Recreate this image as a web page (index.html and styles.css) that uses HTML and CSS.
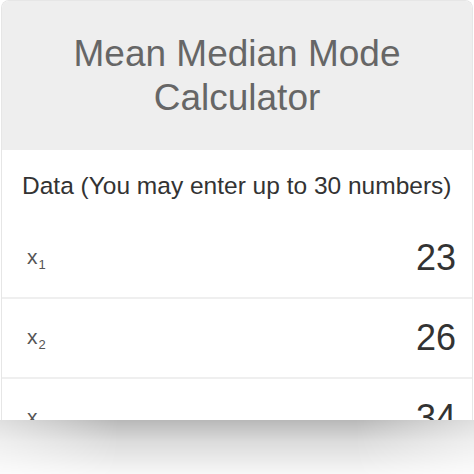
FILE: index.html
```html
<!DOCTYPE html>
<html>
<head>
<meta charset="utf-8">
<link rel="stylesheet" href="styles.css">
</head>
<body>
<div class="page">
  <div class="card">
    <div class="header">
      <h1 class="title">Mean Median Mode<br>Calculator</h1>
    </div>
    <div class="body">
      <div class="label">Data (You may enter up to 30 numbers)</div>
      <div class="row"><span class="var">x<sub>1</sub></span><span class="val">23</span></div>
      <div class="row"><span class="var">x<sub>2</sub></span><span class="val">26</span></div>
      <div class="row"><span class="var">x<sub>3</sub></span><span class="val">34</span></div>
    </div>
  </div>
  <div class="fade"></div>
</div>
</body>
</html>
```
FILE: styles.css
```css
html, body {
  margin: 0;
  padding: 0;
  background: #ffffff;
}
.page {
  width: 474px;
  height: 474px;
  overflow: hidden;
  font-family: "Liberation Sans", Arial, sans-serif;
}
.card {
  margin: 0 1px;
  height: 420px;
  overflow: hidden;
  border: 1px solid #e6e6e6;
  border-bottom: none;
  border-radius: 8px 8px 0 0;
  box-sizing: border-box;
  background: #ffffff;
}
.header {
  height: 149px;
  background: #eeeeee;
  display: flex;
  justify-content: center;
  padding-top: 31px;
  box-sizing: border-box;
}
.title {
  margin: 0;
  font-weight: normal;
  font-size: 37px;
  line-height: 44px;
  color: #666666;
  text-align: center;
}
.body {
  background: #ffffff;
}
.label {
  height: 69px;
  display: flex;
  align-items: center;
  padding-left: 20px;
  font-size: 24.5px;
  color: #333333;
  box-sizing: border-box;
  padding-top: 2px;
}
.row {
  height: 80px;
  display: flex;
  align-items: center;
  justify-content: space-between;
  padding: 0 16px 0 25px;
  border-bottom: 2px solid #efefef;
  box-sizing: border-box;
}
.var {
  font-size: 21px;
  color: #555555;
}
.var sub {
  font-size: 13px;
  vertical-align: -5px;
  margin-left: 1px;
}
.val {
  font-size: 36px;
  color: #333333;
}
.fade {
  height: 54px;
  background: linear-gradient(to bottom, rgba(0,0,0,0.28), rgba(0,0,0,0.14) 40%, rgba(0,0,0,0.03));
  -webkit-mask-image: linear-gradient(to right, rgba(0,0,0,0.45), #000 25%, #000 75%, rgba(0,0,0,0.45));
  mask-image: linear-gradient(to right, rgba(0,0,0,0.45), #000 25%, #000 75%, rgba(0,0,0,0.45));
}
```
